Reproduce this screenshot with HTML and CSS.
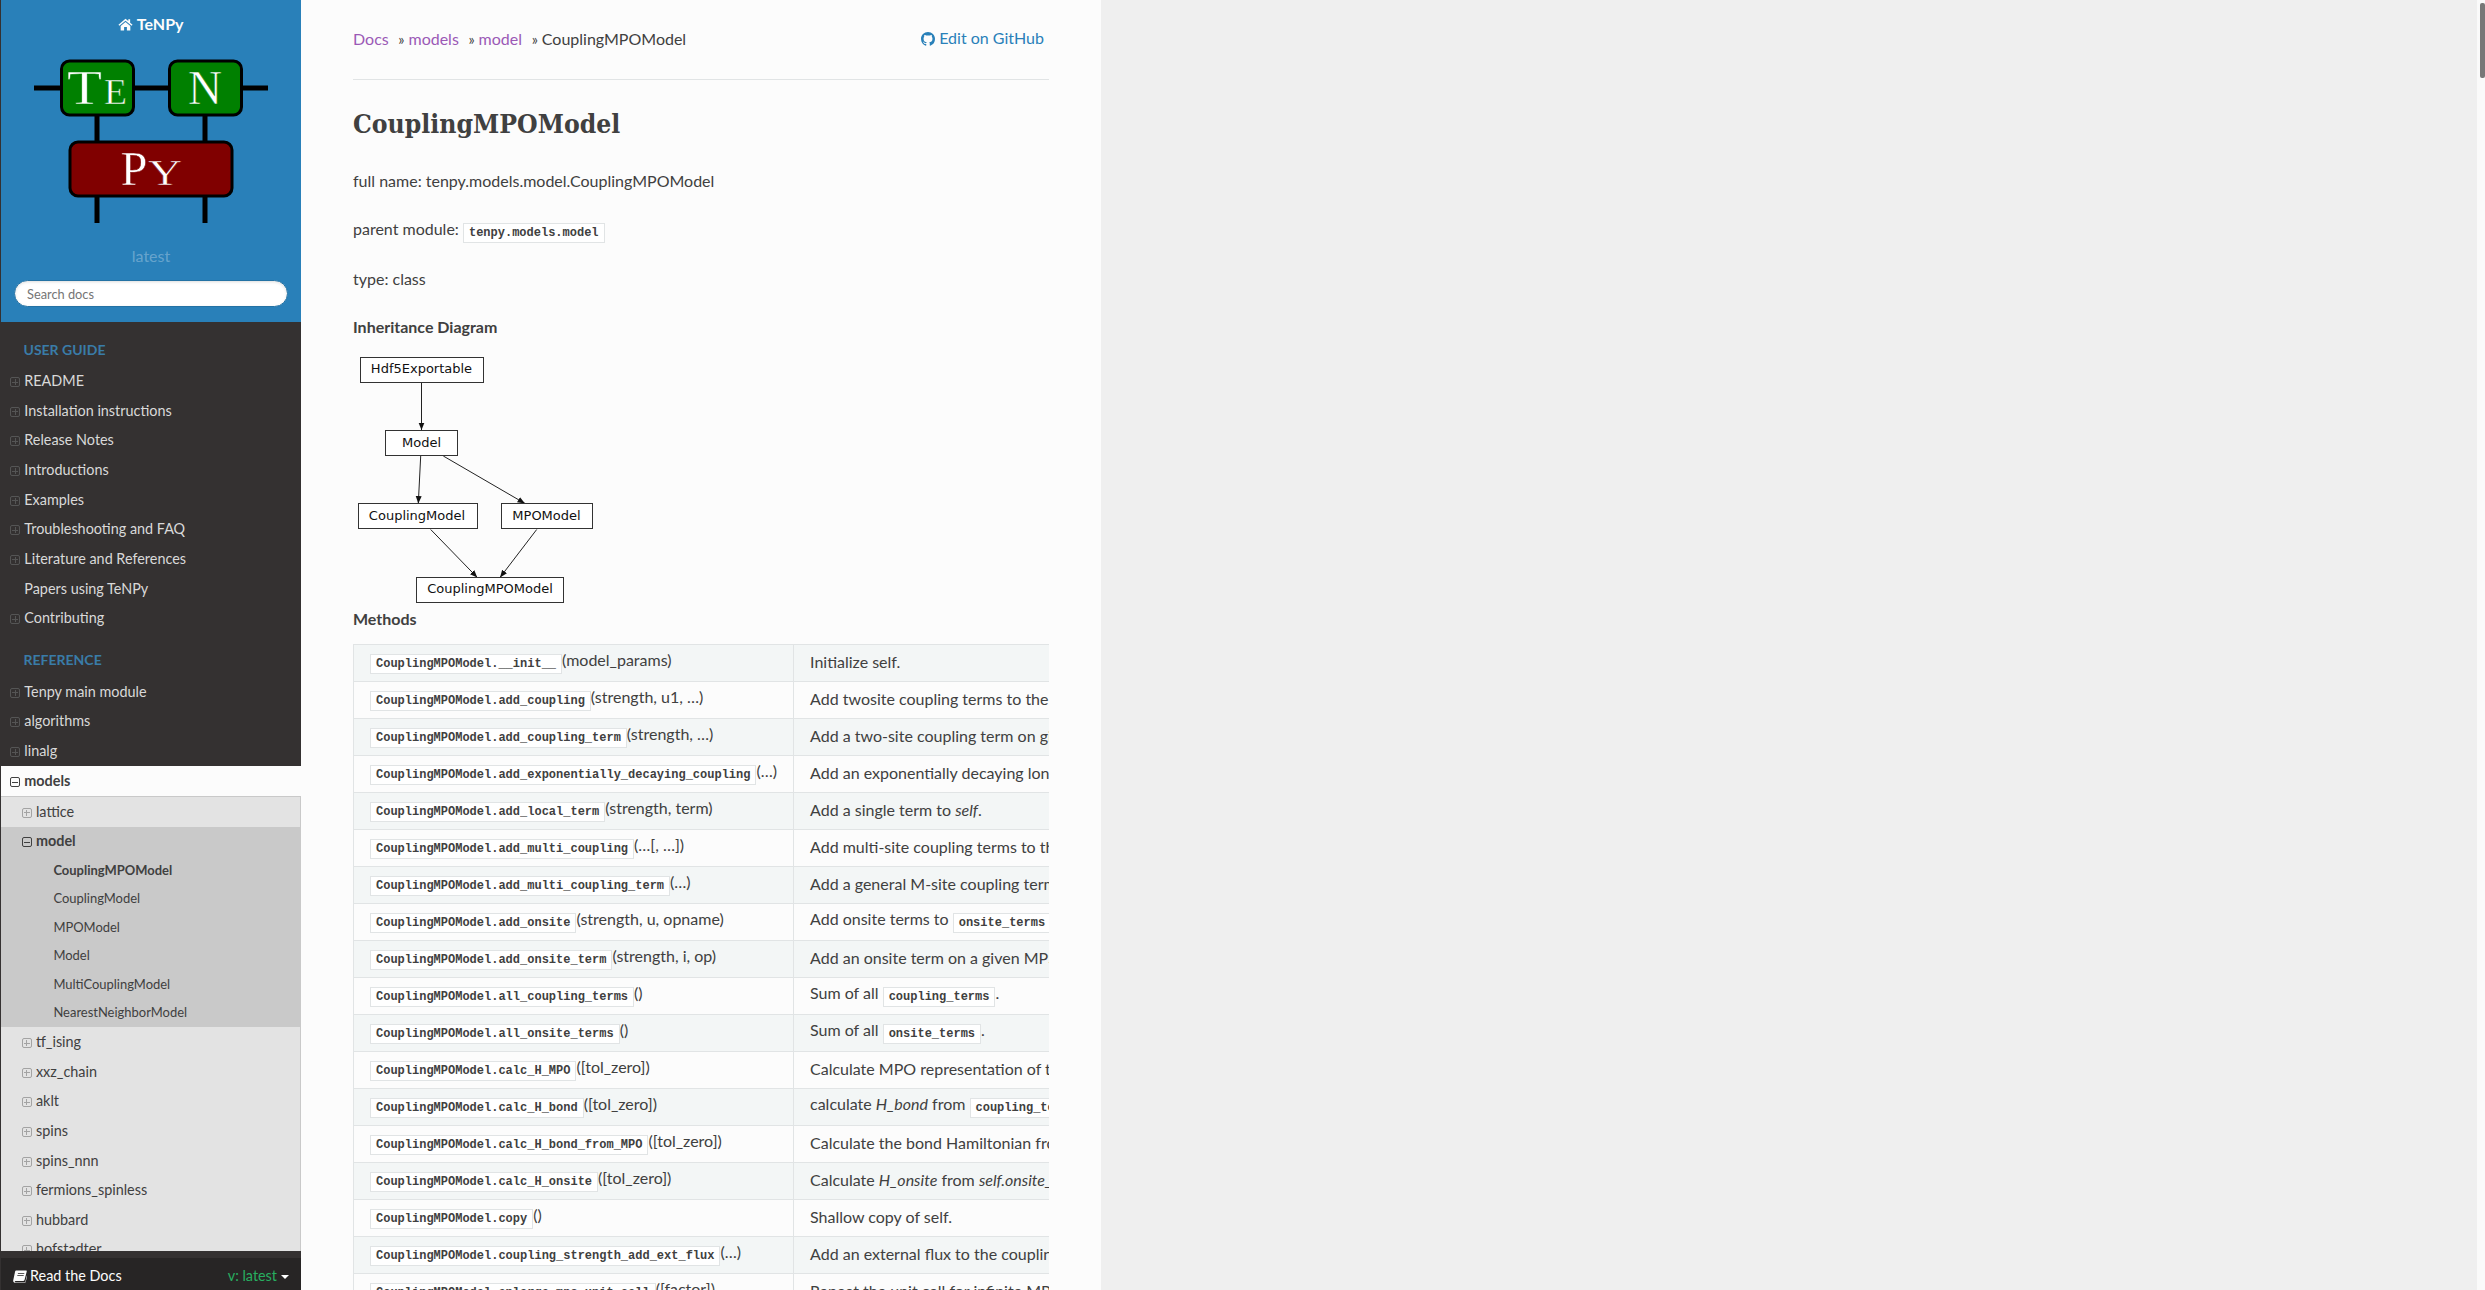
FILE: index.html
```html
<!DOCTYPE html>
<html lang="en">
<head>
<meta charset="utf-8">
<title>CouplingMPOModel — TeNPy</title>
<link rel="stylesheet" href="styles.css">
</head>
<body>
<aside class="side">
  <div class="search-head">
    <a class="project"><svg class="home" viewBox="0 0 16 14"><path fill="#fcfcfc" d="M8 .8.4 7.2l1 1.2L8 2.9l6.6 5.5 1-1.2L13 5V1.3h-2v2zM8 4.2 2.8 8.5v5h3.7V9.6h3v3.9h3.7v-5z"/></svg> TeNPy</a>
    <svg class="logo" viewBox="1 37 300 200">
      <g stroke="#000" stroke-width="5" fill="none">
        <path d="M34 88H268M97 115V142M205 115V142M97 196V223M205 196V223"/>
      </g>
      <g stroke="#000" stroke-width="3">
        <rect x="61.5" y="61" width="72" height="54" rx="8" fill="#008000"/>
        <rect x="169.5" y="61" width="72" height="54" rx="8" fill="#008000"/>
        <rect x="70" y="142" width="162" height="54" rx="8" fill="#800000"/>
      </g>
      <g class="logo-text on-green">
        <text x="67" y="104" font-size="48" textLength="35" lengthAdjust="spacingAndGlyphs">T</text>
        <text x="104" y="104" font-size="36" textLength="23" lengthAdjust="spacingAndGlyphs">E</text>
        <text x="188" y="104" font-size="48" textLength="34" lengthAdjust="spacingAndGlyphs">N</text>
      </g>
      <g class="logo-text on-red">
        <text x="120.5" y="185" font-size="48" textLength="27" lengthAdjust="spacingAndGlyphs">P</text>
        <text x="148" y="185" font-size="36" textLength="34" lengthAdjust="spacingAndGlyphs">Y</text>
      </g>
    </svg>
    <div class="version">latest</div>
    <input class="search" type="text" placeholder="Search docs">
  </div>
  <nav class="menu">
    <p class="caption">User Guide</p>
    <ul>
      <li><a><span class="tg"></span>README</a></li>
      <li><a><span class="tg"></span>Installation instructions</a></li>
      <li><a><span class="tg"></span>Release Notes</a></li>
      <li><a><span class="tg"></span>Introductions</a></li>
      <li><a><span class="tg"></span>Examples</a></li>
      <li><a><span class="tg"></span>Troubleshooting and FAQ</a></li>
      <li><a><span class="tg"></span>Literature and References</a></li>
      <li><a>Papers using TeNPy</a></li>
      <li><a><span class="tg"></span>Contributing</a></li>
    </ul>
    <p class="caption">Reference</p>
    <ul>
      <li><a><span class="tg"></span>Tenpy main module</a></li>
      <li><a><span class="tg"></span>algorithms</a></li>
      <li><a><span class="tg"></span>linalg</a></li>
      <li class="cur1">
        <a class="cur1-link"><span class="tg minus"></span>models</a>
        <ul>
          <li class="l2"><a><span class="tg"></span>lattice</a></li>
          <li class="l2 cur2">
            <a><span class="tg minus"></span>model</a>
            <ul>
              <li class="l3 cur3"><a>CouplingMPOModel</a></li>
              <li class="l3"><a>CouplingModel</a></li>
              <li class="l3"><a>MPOModel</a></li>
              <li class="l3"><a>Model</a></li>
              <li class="l3"><a>MultiCouplingModel</a></li>
              <li class="l3"><a>NearestNeighborModel</a></li>
            </ul>
          </li>
          <li class="l2"><a><span class="tg"></span>tf_ising</a></li>
          <li class="l2"><a><span class="tg"></span>xxz_chain</a></li>
          <li class="l2"><a><span class="tg"></span>aklt</a></li>
          <li class="l2"><a><span class="tg"></span>spins</a></li>
          <li class="l2"><a><span class="tg"></span>spins_nnn</a></li>
          <li class="l2"><a><span class="tg"></span>fermions_spinless</a></li>
          <li class="l2"><a><span class="tg"></span>hubbard</a></li>
          <li class="l2"><a><span class="tg"></span>hofstadter</a></li>
        </ul>
      </li>
    </ul>
  </nav>
  <div class="versions">
    <span class="rtd"><svg class="book" viewBox="0 0 14 13"><path fill="#fcfcfc" d="M3.2.5h10c.5 0 .7.4.6.8L11.5 10c-.2.7-.7 1.1-1.4 1.1H2.5c-.5 0-.9.4-.7.8.1.3.4.5.8.5h8.9c.3 0 .6-.2.7-.5L14.6 3l.4.7-2.4 8.2c-.2.6-.8 1.1-1.5 1.1H2.4C1.2 13 .1 12 .2 10.6L2.1 1.4C2.2.8 2.6.5 3.2.5zM5 3l-.2.8h6.4l.2-.8zM4.4 5l-.2.8h6.4l.2-.8z"/></svg>Read the Docs</span>
    <span class="cur-ver">v: latest<span class="caret"></span></span>
  </div>
</aside>
<main class="content">
  <div class="crumbs">
    <div class="crumb-list">
      <a class="visited">Docs</a><span class="sep">»</span><a class="visited">models</a><span class="sep">»</span><a class="visited">model</a><span class="sep">»</span><span>CouplingMPOModel</span>
    </div>
    <a class="edit"><svg class="gh" viewBox="0 0 16 16"><path fill="#2980b9" fill-rule="evenodd" d="M8 0C3.58 0 0 3.58 0 8c0 3.54 2.29 6.53 5.47 7.59.4.07.55-.17.55-.38 0-.19-.01-.82-.01-1.49-2.01.37-2.53-.49-2.69-.94-.09-.23-.48-.94-.82-1.13-.28-.15-.68-.52-.01-.53.63-.01 1.08.58 1.23.82.72 1.21 1.87.87 2.33.66.07-.52.28-.87.51-1.07-1.78-.2-3.64-.89-3.64-3.95 0-.87.31-1.59.82-2.15-.08-.2-.36-1.02.08-2.12 0 0 .67-.21 2.2.82.64-.18 1.32-.27 2-.27.68 0 1.36.09 2 .27 1.53-1.04 2.2-.82 2.2-.82.44 1.1.16 1.92.08 2.12.51.56.82 1.27.82 2.15 0 3.07-1.87 3.75-3.65 3.95.29.25.54.73.54 1.48 0 1.07-.01 1.93-.01 2.2 0 .21.15.46.55.38A8.013 8.013 0 0016 8c0-4.42-3.58-8-8-8z"/></svg> Edit on GitHub</a>
  </div>
  <hr class="rule">
  <h1 class="title">CouplingMPOModel</h1>
  <p>full name: tenpy.models.model.CouplingMPOModel</p>
  <p class="p-code">parent module: <code>tenpy.models.model</code></p>
  <p>type: class</p>
  <p class="rubric diagram-title">Inheritance Diagram</p>
  <svg class="diagram" viewBox="0 0 260 267">
    <defs>
      <marker id="ah" markerWidth="8" markerHeight="7" refX="7.5" refY="3" orient="auto" markerUnits="userSpaceOnUse"><path d="M0 0 7.5 3 0 6z" fill="#111"/></marker>
    </defs>
    <g class="edges">
      <path marker-end="url(#ah)" d="M68.5 42V90"/>
      <path marker-end="url(#ah)" d="M67.7 116 65.3 163.5"/>
      <path marker-end="url(#ah)" d="M90.3 116 172 163.5"/>
      <path marker-end="url(#ah)" d="M77.7 189.5 124.3 237.5"/>
      <path marker-end="url(#ah)" d="M183.7 189.5 147 237.5"/>
    </g>
    <g class="nodes">
      <rect x="7.5" y="17.5" width="123" height="25"/>
      <rect x="32.5" y="90.5" width="72" height="25"/>
      <rect x="5.5" y="163.5" width="119" height="25"/>
      <rect x="148.5" y="163.5" width="91" height="25"/>
      <rect x="63.5" y="237.5" width="147" height="25"/>
    </g>
    <g class="labels">
      <text x="68.5" y="33">Hdf5Exportable</text>
      <text x="68.5" y="107">Model</text>
      <text x="64" y="180">CouplingModel</text>
      <text x="193.5" y="180">MPOModel</text>
      <text x="137" y="253">CouplingMPOModel</text>
    </g>
  </svg>
  <p class="rubric methods">Methods</p>
  <div class="table-wrap">
    <table class="summary">
      <tr><td><code>CouplingMPOModel.__init__</code>(model_params)</td><td>Initialize self.</td></tr>
      <tr><td><code>CouplingMPOModel.add_coupling</code>(strength, u1, …)</td><td>Add twosite coupling terms to the Hamiltonian, summing over lattice sites.</td></tr>
      <tr><td><code>CouplingMPOModel.add_coupling_term</code>(strength, …)</td><td>Add a two-site coupling term on given MPS sites.</td></tr>
      <tr><td><code>CouplingMPOModel.add_exponentially_decaying_coupling</code>(…)</td><td>Add an exponentially decaying long-range coupling.</td></tr>
      <tr><td><code>CouplingMPOModel.add_local_term</code>(strength, term)</td><td>Add a single term to <em>self</em>.</td></tr>
      <tr><td><code>CouplingMPOModel.add_multi_coupling</code>(…[, …])</td><td>Add multi-site coupling terms to the Hamiltonian, summing over lattice sites.</td></tr>
      <tr><td><code>CouplingMPOModel.add_multi_coupling_term</code>(…)</td><td>Add a general M-site coupling term on given MPS sites.</td></tr>
      <tr><td><code>CouplingMPOModel.add_onsite</code>(strength, u, opname)</td><td>Add onsite terms to <code>onsite_terms</code>.</td></tr>
      <tr><td><code>CouplingMPOModel.add_onsite_term</code>(strength, i, op)</td><td>Add an onsite term on a given MPS site.</td></tr>
      <tr><td><code>CouplingMPOModel.all_coupling_terms</code>()</td><td>Sum of all <code>coupling_terms</code>.</td></tr>
      <tr><td><code>CouplingMPOModel.all_onsite_terms</code>()</td><td>Sum of all <code>onsite_terms</code>.</td></tr>
      <tr><td><code>CouplingMPOModel.calc_H_MPO</code>([tol_zero])</td><td>Calculate MPO representation of the Hamiltonian.</td></tr>
      <tr><td><code>CouplingMPOModel.calc_H_bond</code>([tol_zero])</td><td>calculate <em>H_bond</em> from <code>coupling_terms</code> and <code>onsite_terms</code>.</td></tr>
      <tr><td><code>CouplingMPOModel.calc_H_bond_from_MPO</code>([tol_zero])</td><td>Calculate the bond Hamiltonian from the MPO Hamiltonian.</td></tr>
      <tr><td><code>CouplingMPOModel.calc_H_onsite</code>([tol_zero])</td><td>Calculate <em>H_onsite</em> from <em>self.onsite_terms</em>.</td></tr>
      <tr><td><code>CouplingMPOModel.copy</code>()</td><td>Shallow copy of self.</td></tr>
      <tr><td><code>CouplingMPOModel.coupling_strength_add_ext_flux</code>(…)</td><td>Add an external flux to the coupling strength.</td></tr>
      <tr><td><code>CouplingMPOModel.enlarge_mps_unit_cell</code>([factor])</td><td>Repeat the unit cell for infinite MPS boundary conditions.</td></tr>
    </table>
  </div>
</main>
<div class="scrollbar"><div class="thumb"></div></div>
</body>
</html>
```
FILE: styles.css
```css
* { box-sizing: border-box; }
html, body { margin: 0; height: 100%; overflow: hidden; }
body {
  display: flex;
  background: #efefef;
  font-family: Lato, "Liberation Sans", sans-serif;
  font-size: 16px;
  line-height: 24px;
  color: #404040;
}
ul { list-style: none; margin: 0; padding: 0; }

/* sidebar */
.side {
  width: 301px;
  flex: none;
  height: 100vh;
  border-left: 1px solid #343131;
  background: #343131;
  display: flex;
  flex-direction: column;
}
.search-head {
  background: #2980b9;
  height: 322px;
  flex: none;
  padding-top: 12px;
  text-align: center;
  color: #fcfcfc;
}
.project { display: block; font-weight: 700; font-size: 16px; line-height: 24px; color: #fcfcfc; }
.home { width: 15px; height: 13px; vertical-align: -1px; }
.logo { display: block; width: 300px; height: 200px; margin-top: 1px; }
.logo-text text { font-family: "Liberation Serif", serif; fill: #fff; stroke-width: .5; }
.on-green text { stroke: #008000; }
.on-red text { stroke: #800000; }
.version { margin-top: 7px; line-height: 24px; color: rgba(255, 255, 255, .3); }
.search {
  display: block;
  width: 274px;
  height: 27px;
  margin: 12px 0 0 13px;
  padding: 0 12px;
  border: 1px solid #2472a4;
  border-radius: 50px;
  background: #fff;
  font-family: Lato, sans-serif;
  font-size: 12.8px;
  box-shadow: inset 0 1px 3px #ddd;
  outline: none;
}
.search::placeholder { color: #757575; }
.menu { flex: 1; min-height: 0; overflow: hidden; font-size: 14.4px; line-height: 18px; padding-top: .4px; }
.caption {
  margin: 12px 0 0;
  height: 32px;
  line-height: 31px;
  padding-left: 22.5px;
  font-size: 14px;
  font-weight: 700;
  text-transform: uppercase;
  color: #3a7ca8;
  white-space: nowrap;
}
.menu ul + .caption { line-height: 30px; }
.menu a { display: block; padding: .4045em 1.618em; color: #d9d9d9; white-space: nowrap; }
.tg {
  display: inline-block;
  width: 10px;
  height: 10px;
  margin-left: -14.3px;
  margin-right: 4.3px;
  vertical-align: -1px;
  border: 1px solid #555;
  border-radius: 2px;
  color: #555;
  background:
    linear-gradient(currentColor, currentColor) center / 6px 1px no-repeat,
    linear-gradient(currentColor, currentColor) center / 1px 6px no-repeat;
}
.tg.minus {
  background: linear-gradient(currentColor, currentColor) center / 6px 1px no-repeat;
  color: #404040;
  border-color: #404040;
}
.cur1 { background: #e3e3e3; }
.menu .cur1 > a.cur1-link {
  background: #fcfcfc;
  color: #404040;
  font-weight: 700;
  border-bottom: 1px solid #c9c9c9;
  height: 31px;
  padding-top: 6.5px;
}
.menu .l2 > a { padding: .4045em 2.427em; color: #404040; border-right: 1px solid #c9c9c9; }
.l2 .tg { color: #a3a3a3; border-color: #a3a3a3; }
.l2.cur2 { background: #c9c9c9; }
.l2.cur2 > ul { margin: -.4px 0 .7px; }
.menu .l2.cur2 > a { font-weight: 700; border-right: none; }
.l2.cur2 .tg { color: #404040; border-color: #404040; }
.menu .l3 > a { font-size: 90%; padding: .4045em 4.045em; color: #404040; }
.menu .l3.cur3 > a { font-weight: 700; }
.versions {
  flex: none;
  height: 39px;
  border-top: 7px solid #343131;
  background: #272525;
  color: #fcfcfc;
  font-size: 14.4px;
  line-height: 36px;
  display: flex;
  justify-content: space-between;
  padding: 0 12px;
}
.book { width: 14px; height: 13px; margin-right: 3px; vertical-align: -2px; }
.cur-ver { color: #27ae60; }
.caret {
  display: inline-block;
  margin-left: 4px;
  vertical-align: 2px;
  border-left: 4.5px solid transparent;
  border-right: 4.5px solid transparent;
  border-top: 4.5px solid #fff;
}

/* content */
.content {
  width: 800px;
  flex: none;
  height: 100vh;
  overflow: hidden;
  background: #fcfcfc;
  padding: 26px 52px 0;
}
.crumbs { display: flex; justify-content: space-between; height: 24px; }
.crumb-list { padding-top: 1px; }
.visited { color: #9b59b6; }
.sep { margin: 0 4px 0 9.6px; font-size: 14.4px; }
.edit { color: #2980b9; margin-right: 5px; }
.gh { width: 14px; height: 14px; vertical-align: -2px; }
.rule { height: 1px; border: 0; background: #e1e4e5; margin: 29px 0 27px; }
.title {
  margin: 0 0 28px;
  font-family: "DejaVu Serif Condensed", "DejaVu Serif", serif;
  font-size: 26.3px;
  line-height: 34px;
  font-weight: 700;
  color: #404040;
}
.content p { margin: 0 0 24px; }
.content .p-code { height: 26px; }
.content .rubric { margin: 0; font-weight: 700; }
.content .diagram-title { margin-bottom: 1px; }
.content .methods { margin-bottom: 13px; }
code {
  font-family: "Liberation Mono", monospace;
  font-size: 12px;
  font-weight: 700;
  color: #404040;
  background: #fff;
  border: 1px solid #e1e4e5;
  padding: 2px 5px;
  vertical-align: -1px;
}
.diagram { display: block; width: 260px; height: 267px; }
.edges path { stroke: #222; stroke-width: 1; fill: none; }
.nodes rect { fill: #fff; stroke: #333; stroke-width: 1; }
.labels text { font-family: "DejaVu Sans", sans-serif; font-size: 13px; text-anchor: middle; fill: #111; }
.table-wrap { overflow: hidden; }
.summary { border-collapse: collapse; border-top: 1px solid #e1e4e5; border-left: 1px solid #e1e4e5; }
.summary td {
  height: 37px;
  padding: 0 16px 2px;
  white-space: nowrap;
  line-height: 20px;
  border-bottom: 1px solid #e1e4e5;
  border-right: 1px solid #e1e4e5;
}
.summary td:first-child { width: 439px; min-width: 439px; }
.summary tr:nth-child(odd) td { background: #f3f6f6; }

/* window scrollbar */
.scrollbar {
  position: fixed;
  top: 0;
  right: 0;
  width: 8px;
  height: 100%;
  background: #fafafa;
}
.thumb { margin: 3px 0 0 3px; width: 5px; height: 75px; background: #777; border-radius: 2px; }
```
